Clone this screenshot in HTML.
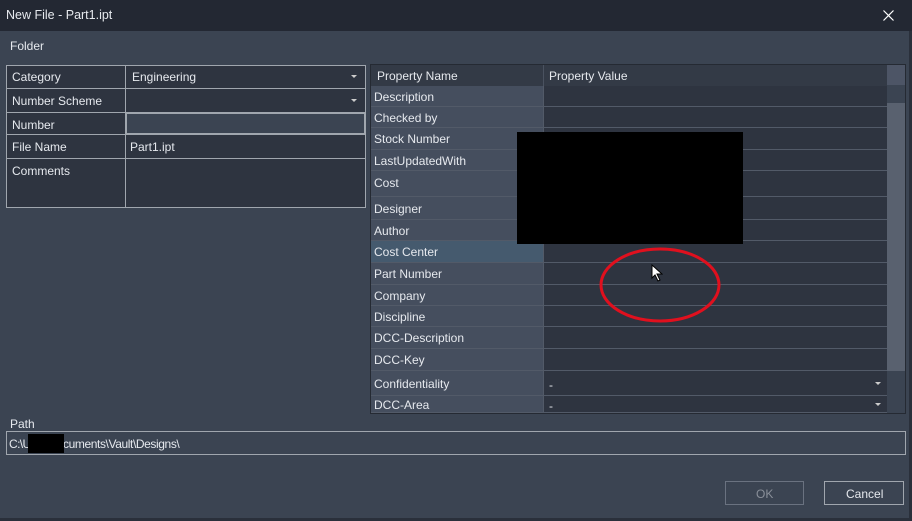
<!DOCTYPE html>
<html><head><style>
*{margin:0;padding:0;box-sizing:border-box}
body{width:912px;height:521px;background:#3b4452;font-family:"Liberation Sans",sans-serif;font-size:12px;color:#e6e9ee;position:relative;overflow:hidden}
.a{position:absolute}
.t{line-height:1;white-space:nowrap}
</style></head><body>
<div class="a" style="left:0;top:0;width:912px;height:31px;background:#232833"></div>
<div class="a t" style="left:6px;top:9px;font-size:12.5px">New File - Part1.ipt</div>
<svg class="a" style="left:883px;top:10px" width="11" height="11"><path d="M0.5 0.5L10.5 10.5M10.5 0.5L0.5 10.5" stroke="#fff" stroke-width="1.2"/></svg>
<div class="a" style="left:909px;top:31px;width:3px;height:490px;background:#2a303b"></div>
<div class="a" style="left:0;top:518px;width:912px;height:3px;background:#2a303b"></div>
<div class="a t" style="left:10px;top:40px">Folder</div>

<div class="a" style="left:6px;top:65px;width:360px;height:143px;background:#2e3440;border:1px solid #a0a6ae"></div>
<div class="a" style="left:125px;top:65px;width:1px;height:143px;background:#a0a6ae"></div>
<div class="a" style="left:7px;top:88px;width:358px;height:1px;background:#a0a6ae"></div>
<div class="a" style="left:7px;top:112px;width:358px;height:1px;background:#a0a6ae"></div>
<div class="a" style="left:7px;top:134px;width:358px;height:1px;background:#a0a6ae"></div>
<div class="a" style="left:7px;top:158px;width:358px;height:1px;background:#a0a6ae"></div>
<div class="a" style="left:126px;top:113px;width:239px;height:21px;background:#3b4452;border:1px solid #a0a6ae"></div>
<div class="a t" style="left:12px;top:71px">Category</div>
<div class="a t" style="left:132px;top:71px">Engineering</div>
<div class="a t" style="left:12px;top:95px">Number Scheme</div>
<div class="a t" style="left:12px;top:119px">Number</div>
<div class="a t" style="left:12px;top:141px">File Name</div>
<div class="a t" style="left:130px;top:141px">Part1.ipt</div>
<div class="a t" style="left:12px;top:165px">Comments</div>
<svg class="a" style="left:351px;top:75px" width="6" height="4"><path d="M0 0H6L3 3Z" fill="#ccc"/></svg>
<svg class="a" style="left:351px;top:99px" width="6" height="4"><path d="M0 0H6L3 3Z" fill="#ccc"/></svg>

<div class="a" style="left:370px;top:64px;width:536px;height:350px;background:#2e3440;border:1px solid #252a33"></div>
<div class="a" style="left:371px;top:65px;width:516px;height:21px;background:#333a46"></div>
<div class="a" style="left:543px;top:65px;width:1px;height:21px;background:#4a5260"></div>
<div class="a t" style="left:377px;top:70px">Property Name</div>
<div class="a t" style="left:549px;top:70px">Property Value</div>
<div class="a" style="left:887px;top:65px;width:18px;height:348px;background:#3b4452"></div>
<div class="a" style="left:887px;top:65px;width:18px;height:20px;background:#4d5566"></div>
<div class="a" style="left:887px;top:103px;width:18px;height:268px;background:#59616f"></div>
<div id="rows"></div>
<script>
var r=[["Description",86,107],["Checked by",107,128],["Stock Number",128,150],["LastUpdatedWith",150,171],["Cost",171,197],["Designer",197,220],["Author",220,241],["Cost Center",241,263],["Part Number",263,285],["Company",285,306],["Discipline",306,327],["DCC-Description",327,349],["DCC-Key",349,371],["Confidentiality",371,396],["DCC-Area",396,413]];
var h="";
r.forEach(function(x,i){
var bg=x[0]=="Cost Center"?"#455a6e":"#454e5e";
h+='<div class="a" style="left:371px;top:'+x[1]+'px;width:172px;height:'+(x[2]-x[1])+'px;background:'+bg+'"></div>';
h+='<div class="a" style="left:371px;top:'+(x[2]-1)+'px;width:516px;height:1px;background:#525a68"></div>';
var ty=x[1]+Math.round((x[2]-x[1])/2)-6;
if(x[0]=="Cost")ty=x[1]+6;
h+='<div class="a t" style="left:374px;top:'+ty+'px">'+x[0]+'</div>';
if(i>=13){h+='<div class="a t" style="left:549px;top:'+(ty+1)+'px">-</div><svg class="a" style="left:875px;top:'+(ty+4)+'px" width="6" height="4"><path d="M0 0H6L3 3Z" fill="#ccc"/></svg>';}
});
h+='<div class="a" style="left:543px;top:86px;width:1px;height:327px;background:#525a68"></div>';
document.getElementById("rows").innerHTML=h;
</script>
<div class="a" style="left:517px;top:132px;width:226px;height:112px;background:#000"></div>
<svg class="a" style="left:590px;top:240px" width="140" height="90"><ellipse cx="70" cy="45" rx="59" ry="36" fill="none" stroke="#e0101e" stroke-width="3"/></svg>
<svg class="a" style="left:651px;top:264px" width="12" height="18"><path d="M1 1V14L4 11L7 17L9 16L6 10H11Z" fill="#fff" stroke="#000" stroke-width="1"/></svg>

<div class="a t" style="left:10px;top:418px">Path</div>
<div class="a" style="left:6px;top:431px;width:900px;height:24px;border:1px solid #a0a6ae"></div>
<div class="a t" style="left:9px;top:438px;letter-spacing:-0.6px">C:\User</div>
<div class="a t" style="left:63px;top:438px;letter-spacing:-0.4px">cuments\Vault\Designs\</div>
<div class="a" style="left:28px;top:434px;width:36px;height:19px;background:#000"></div>
<div class="a" style="left:725px;top:481px;width:79px;height:24px;border:1px solid #6a7280"></div>
<div class="a t" style="left:756px;top:488px;color:#8a909a">OK</div>
<div class="a" style="left:824px;top:481px;width:80px;height:24px;border:1px solid #a0a6ae"></div>
<div class="a t" style="left:846px;top:488px">Cancel</div>
</body></html>
